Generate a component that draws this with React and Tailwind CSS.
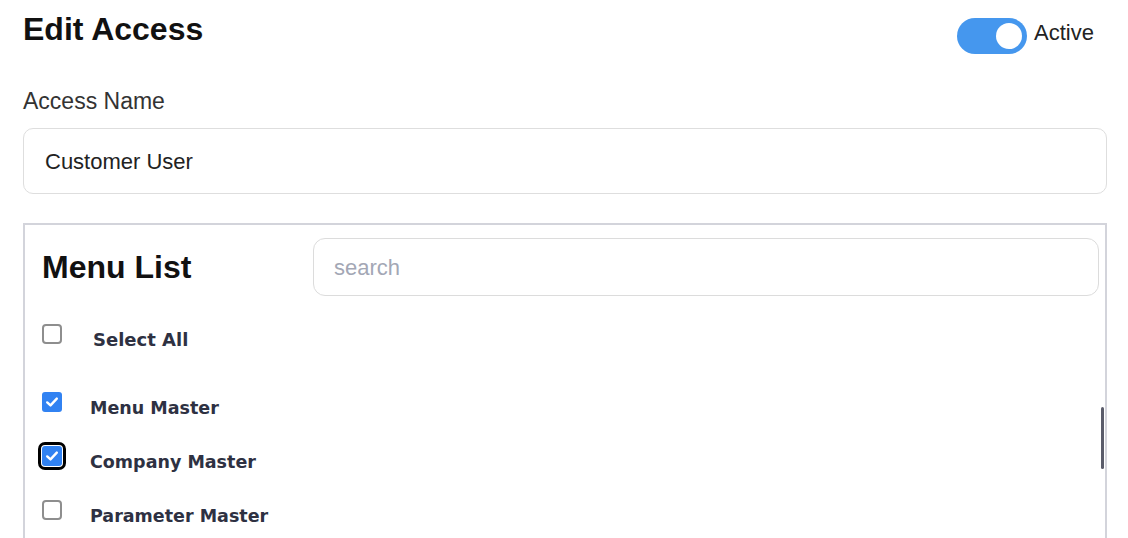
import { useState } from "react";

const ITEMS = [
  { name: "Menu Master", checked: true },
  { name: "Company Master", checked: true, focused: true },
  { name: "Parameter Master", checked: false },
];

function Check({ checked, focused }) {
  if (!checked) {
    return <div className="w-5 h-5 shrink-0 rounded-[4px] border-2 border-[#8e8e8e] bg-white" />;
  }
  return (
    <div
      className={
        "w-5 h-5 shrink-0 rounded-[3px] bg-[#3182f2] flex items-center justify-center " +
        (focused ? "outline-[3px] outline-black outline-offset-[1px]" : "")
      }
    >
      <svg viewBox="0 0 16 16" className="w-4 h-4" fill="none">
        <path d="M3.2 8.4 6.5 11.4 12.8 4.6" stroke="white" strokeWidth="2.4" strokeLinecap="round" strokeLinejoin="round" />
      </svg>
    </div>
  );
}

export default function App() {
  const [active] = useState(true);

  return (
    <div className="h-[538px] overflow-hidden bg-white pl-[23px] pr-[21px] pt-[9px] font-['Liberation_Sans',Arial,sans-serif]">
      <div className="flex items-center justify-between h-10">
        <h1 className="text-[32px] leading-10 font-bold text-[#111]">Edit Access</h1>
        <div className="flex items-center gap-[7px] mr-[13px] mt-[14px]">
          <div className={"w-[70px] h-9 rounded-full flex items-center px-[5px] justify-end " + (active ? "bg-[#4597ee]" : "bg-gray-300")}>
            <div className="w-[26px] h-[26px] rounded-full bg-white" />
          </div>
          <span className="text-[22px] text-[#222] -mt-[8px]">Active</span>
        </div>
      </div>

      <label className="block mt-[39px] text-[23px] leading-[26px] text-[#333]">Access Name</label>

      <div className="mt-[14px] h-[66px] rounded-[10px] border-[1.5px] border-[#dedede] flex items-center pl-[21px]">
        <span className="text-[22px] text-[#222]">Customer User</span>
      </div>

      <div className="mt-[29px] border-2 border-[#d3d4db] pt-[13px] pl-[17px] pr-[6px] h-[400px]">
        <div className="flex items-center">
          <h2 className="w-[271px] shrink-0 text-[32px] font-bold text-[#111] leading-10">Menu List</h2>
          <div className="flex-1 h-[58px] rounded-[12px] border-[1.5px] border-[#dcdcdc] flex items-center pl-[20px]">
            <span className="text-[22px] text-[#a3a7b5]">search</span>
          </div>
        </div>

        <div className="mt-[28px] flex items-start font-['DejaVu_Sans',Verdana,sans-serif] font-bold text-[18px] leading-5 text-[#2e3142]">
          <Check checked={false} />
          <span className="ml-[31px] mt-[6px]">Select All</span>
        </div>

        <div className="relative mt-[42px] h-[220px] font-['DejaVu_Sans',Verdana,sans-serif] font-bold text-[17.5px] leading-5 text-[#2e3142]">
          <div className="flex flex-col gap-[28px]">
            {ITEMS.map((it) => (
              <div key={it.name} className="flex items-start">
                <Check checked={it.checked} focused={it.focused} />
                <span className="ml-[28px] mt-[6px]">{it.name}</span>
              </div>
            ))}
          </div>
          <div className="absolute -right-[5px] top-[15px] w-[3px] h-[62px] rounded-full bg-[#5a5c6a]" />
        </div>
      </div>
    </div>
  );
}
